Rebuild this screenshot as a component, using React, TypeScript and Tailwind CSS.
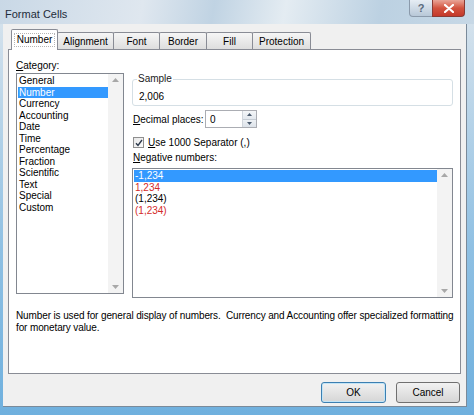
import React from 'react'

const categories = [
  'General', 'Number', 'Currency', 'Accounting', 'Date', 'Time',
  'Percentage', 'Fraction', 'Scientific', 'Text', 'Special', 'Custom',
]

const negatives = [
  { label: '-1,234', red: false },
  { label: '1,234', red: true },
  { label: '(1,234)', red: false },
  { label: '(1,234)', red: true },
]

const tabs = [
  { label: 'Number', w: 'w-[47px]' },
  { label: 'Alignment', w: 'w-[57px]' },
  { label: 'Font', w: 'w-[47px]' },
  { label: 'Border', w: 'w-[48px]' },
  { label: 'Fill', w: 'w-[47px]' },
  { label: 'Protection', w: 'w-[59px]' },
]

function ScrollCol() {
  return (
    <div className="w-[15px] shrink-0 bg-[#f3f3f3] flex flex-col justify-between items-center py-[4px]">
      <svg width="7" height="4" viewBox="0 0 7 4"><path d="M0 4 L3.5 0 L7 4 Z" fill="#a8a8a8" /></svg>
      <svg width="7" height="4" viewBox="0 0 7 4"><path d="M0 0 L3.5 4 L7 0 Z" fill="#a8a8a8" /></svg>
    </div>
  )
}

function Tab({ label, w, active }: { label: string; w: string; active: boolean }) {
  if (active) {
    return (
      <div className={`${w} h-[21px] -mb-px relative z-10 bg-white border border-[#898c95] border-b-0 rounded-t-[2px] flex items-center justify-center`}>
        <span className="border border-[#b5b5b5] border-dotted px-[2px] leading-[12px]">{label}</span>
      </div>
    )
  }
  return (
    <div className={`${w} h-[17px] -ml-px first:ml-0 bg-gradient-to-b from-[#f6f6f6] to-[#dedede] border border-[#898c95] border-b-0 rounded-t-[2px] flex items-center justify-center`}>
      {label}
    </div>
  )
}

export default function App() {
  return (
    <div
      className="w-[474px] h-[415px] overflow-hidden flex flex-col text-[10px] text-black bg-[linear-gradient(180deg,#c3d5e4_0%,#d3e1ec_6%,#8fc0e3_60%,#6fb0de_100%)]"
      style={{ fontFamily: '"Liberation Sans", Arial, sans-serif' }}
    >
      {/* caption */}
      <div className="h-[24px] shrink-0 flex justify-between bg-[linear-gradient(100deg,#c9d8e6_0%,#dfe7ef_30%,#c0d3e3_45%,#e4ecf2_60%,#bcd1e2_80%,#c7d8e6_100%)]">
        <div className="pl-[5px] pt-[6px] text-[11px] text-[#1e2c3a]">Format Cells</div>
        <div className="flex mr-[9px] h-[17px]">
          <div className="w-[24px] h-full rounded-bl-[4px] border border-[#8b9aab] border-t-0 bg-gradient-to-b from-[#e6edf4] to-[#b8c8d8] flex items-center justify-center text-[11px] font-bold text-[#5a6b7d]">?</div>
          <div className="w-[33px] h-full -ml-px rounded-br-[4px] border border-[#8a3b34] border-t-0 bg-gradient-to-b from-[#e8a497] via-[#d2533f] to-[#c4382a] flex items-center justify-center">
            <svg width="10" height="9" viewBox="0 0 10 9">
              <path d="M1 1 L9 8 M9 1 L1 8" stroke="white" strokeWidth="2.2" strokeLinecap="round" />
            </svg>
          </div>
        </div>
      </div>

      {/* client */}
      <div className="ml-[3px] w-[464px] h-[383px] bg-[#f0f0f0] border-r border-b border-[#7a8a9a] flex flex-col">
        <div className="pt-[4px] px-[5px] flex flex-col">
          <div className="flex items-end pl-[3px] h-[21px]">
            {tabs.map((t, i) => (
              <Tab key={t.label} label={t.label} w={t.w} active={i === 0} />
            ))}
          </div>
          <div className="h-[325px] bg-white border border-[#898c95] pt-[9px] pl-[7px] flex flex-col">
            <div className="flex gap-[8px]">
              {/* category column */}
              <div className="w-[108px] flex flex-col">
                <div className="leading-[14px]"><span className="underline">C</span>ategory:</div>
                <div className="h-[221px] border border-[#828790] flex bg-white">
                  <div className="flex-1 pt-[1px] pl-[1px]">
                    {categories.map(c => (
                      <div
                        key={c}
                        className={`leading-[11.5px] pl-[1px] ${c === 'Number' ? 'bg-[#3399ff] text-white' : ''}`}
                      >
                        {c}
                      </div>
                    ))}
                  </div>
                  <ScrollCol />
                </div>
              </div>

              {/* options column */}
              <div className="w-[321px] flex flex-col">
                <fieldset className="mt-[14px] border border-[#d5dfe5] rounded-[3px] pl-[6px] pb-[2px]">
                  <legend className="leading-[12px] px-[1px] -ml-[2px] text-[#222]">Sample</legend>
                  <div className="pt-[6px] leading-[12px]">2,006</div>
                </fieldset>

                <div className="mt-[4px] h-[18px] flex items-center">
                  <div className="w-[73px] pl-[1px]"><span className="underline">D</span>ecimal places:</div>
                  <div className="w-[52px] h-full border border-[#abadb3] bg-white flex">
                    <div className="flex-1 pl-[4px] flex items-center">0</div>
                    <div className="w-[14px] flex flex-col border-l border-[#d0d5db]">
                      <div className="flex-1 bg-gradient-to-b from-[#f4f6f8] to-[#e3e8ee] border-b border-[#c5ccd4] flex items-center justify-center">
                        <svg width="5" height="3" viewBox="0 0 5 3"><path d="M0 3 L2.5 0 L5 3 Z" fill="#4b5b6e" /></svg>
                      </div>
                      <div className="flex-1 bg-gradient-to-b from-[#eef1f4] to-[#dde3ea] flex items-center justify-center">
                        <svg width="5" height="3" viewBox="0 0 5 3"><path d="M0 0 L2.5 3 L5 0 Z" fill="#4b5b6e" /></svg>
                      </div>
                    </div>
                  </div>
                </div>

                <div className="mt-[9px] h-[11px] flex items-center gap-[4px] pl-[1px]">
                  <div className="w-[11px] h-[11px] border border-[#8f8f8f] bg-gradient-to-br from-[#e8e8e8] to-[#fbfbfb] flex items-center justify-center">
                    <svg width="8" height="8" viewBox="0 0 8 8"><path d="M1 4.2 L3 6.5 L7 1" stroke="#2d3a4c" strokeWidth="1.4" fill="none" /></svg>
                  </div>
                  <div><span className="underline">U</span>se 1000 Separator (,)</div>
                </div>

                <div className="mt-[4px] leading-[12px] pl-[1px]"><span className="underline">N</span>egative numbers:</div>

                <div className="mt-[4px] h-[130px] border border-[#828790] flex bg-white">
                  <div className="flex-1 pt-[1px] pl-[1px]">
                    {negatives.map((n, i) => (
                      <div
                        key={i}
                        className={`leading-[11.5px] pl-[1px] ${i === 0 ? 'bg-[#3399ff] text-white' : n.red ? 'text-[#d42a2a]' : ''}`}
                      >
                        {n.label}
                      </div>
                    ))}
                  </div>
                  <ScrollCol />
                </div>
              </div>
            </div>

            <div className="mt-[12px] leading-[12px] tracking-[-0.12px]">
              Number is used for general display of numbers.&nbsp; Currency and Accounting offer specialized formatting for monetary value.
            </div>
          </div>
        </div>

        {/* buttons */}
        <div className="mt-[8px] flex justify-end gap-[10px] pr-[6px]">
          <button className="w-[65px] h-[21px] rounded-[3px] border border-[#3c7fb1] shadow-[inset_0_0_0_1px_#c2e4f6] bg-gradient-to-b from-[#f2f2f2] to-[#d5d5d5] text-[10px]">OK</button>
          <button className="w-[64px] h-[21px] rounded-[3px] border border-[#707070] bg-gradient-to-b from-[#f2f2f2] to-[#d5d5d5] text-[10px]">Cancel</button>
        </div>
      </div>
    </div>
  )
}
